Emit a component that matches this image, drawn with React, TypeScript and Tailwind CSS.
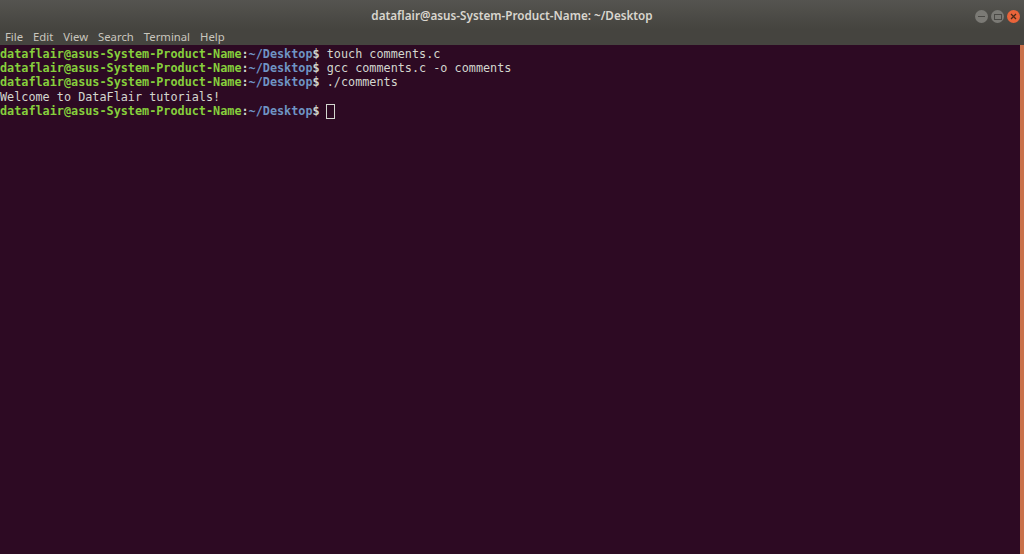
const promptUser = 'dataflair@asus-System-Product-Name'

function Prompt() {
  return (
    <span className="font-bold">
      <span className="text-[#86cf3c]">{promptUser}</span>
      <span className="text-[#cfd3cb]">:</span>
      <span className="text-[#6f94c4]">~/Desktop</span>
      <span className="text-[#cfd3cb]">$</span>
    </span>
  )
}

const menuItems = ['File', 'Edit', 'View', 'Search', 'Terminal', 'Help']

export default function App() {
  return (
    <div className="flex h-[554px] w-[1024px] flex-col overflow-hidden bg-[#2d0a23]">
      <header className="relative flex h-[29px] shrink-0 items-center justify-center bg-gradient-to-b from-[#555450] to-[#45443f] pt-[3px]">
        <span className="font-['Noto_Sans',sans-serif] text-[11.7px] font-semibold text-[#d9d6cf]">
          dataflair@asus-System-Product-Name: ~/Desktop
        </span>
        <div className="absolute right-[4px] top-[10px] flex items-center gap-[3px]">
          <span className="flex h-[13px] w-[13px] items-center justify-center rounded-full bg-[#7b7a75]">
            <span className="h-px w-[7px] bg-[#4a4945]" />
          </span>
          <span className="flex h-[13px] w-[13px] items-center justify-center rounded-full bg-[#7b7a75]">
            <span className="h-[6px] w-[8px] border border-[#4a4945]" />
          </span>
          <span className="flex h-[13px] w-[13px] items-center justify-center rounded-full bg-[#e9643a]">
            <svg width="7" height="7" viewBox="0 0 7 7" fill="none" stroke="#4a2a1a" strokeWidth="1.3">
              <path d="M1 1l5 5M6 1l-5 5" />
            </svg>
          </span>
        </div>
      </header>
      <nav className="flex h-[16px] shrink-0 items-center gap-[10px] bg-[#45443f] pl-[5px] font-['Noto_Sans',sans-serif] text-[11.3px] text-[#c9c6be]">
        {menuItems.map((item) => (
          <span key={item}>{item}</span>
        ))}
      </nav>
      <div className="flex min-h-0 flex-1">
        <main className="flex-1 pt-[2px] font-['DejaVu_Sans_Mono',monospace] text-[11.8px] leading-[14.2px] whitespace-pre text-[#d3d7cf]">
          <div>
            <Prompt /> touch comments.c
          </div>
          <div>
            <Prompt /> gcc comments.c -o comments
          </div>
          <div>
            <Prompt /> ./comments
          </div>
          <div>Welcome to DataFlair tutorials!</div>
          <div className="flex items-center">
            <Prompt />
            <span className="ml-[6px] h-[15px] w-[9px] border border-[#d3d7cf]" />
          </div>
        </main>
        <div className="w-[4px] shrink-0 bg-[#c9714a]" />
      </div>
    </div>
  )
}
